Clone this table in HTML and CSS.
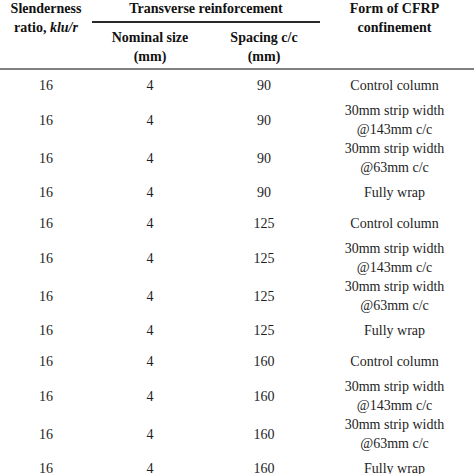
FILE: index.html
```html
<!DOCTYPE html>
<html>
<head>
<meta charset="utf-8">
<link rel="stylesheet" href="styles.css">
</head>
<body>
<table class="data">
  <colgroup>
    <col class="c1"><col class="c2"><col class="c3"><col class="c4">
  </colgroup>
  <thead>
    <tr>
      <th rowspan="2" class="hside">Slenderness<br>ratio, <i>klu/r</i></th>
      <th colspan="2" class="hgroup">Transverse reinforcement</th>
      <th rowspan="2" class="hside last">Form of CFRP<br>confinement</th>
    </tr>
    <tr>
      <th class="hsub">Nominal size<br>(mm)</th>
      <th class="hsub">Spacing c/c<br>(mm)</th>
    </tr>
  </thead>
  <tbody>
    <tr class="one"><td>16</td><td>4</td><td>90</td><td class="last">Control column</td></tr>
    <tr class="two"><td>16</td><td>4</td><td>90</td><td class="last">30mm strip width<br>@143mm c/c</td></tr>
    <tr class="two"><td>16</td><td>4</td><td>90</td><td class="last">30mm strip width<br>@63mm c/c</td></tr>
    <tr class="one"><td>16</td><td>4</td><td>90</td><td class="last">Fully wrap</td></tr>
    <tr class="one"><td>16</td><td>4</td><td>125</td><td class="last">Control column</td></tr>
    <tr class="two"><td>16</td><td>4</td><td>125</td><td class="last">30mm strip width<br>@143mm c/c</td></tr>
    <tr class="two"><td>16</td><td>4</td><td>125</td><td class="last">30mm strip width<br>@63mm c/c</td></tr>
    <tr class="one"><td>16</td><td>4</td><td>125</td><td class="last">Fully wrap</td></tr>
    <tr class="one"><td>16</td><td>4</td><td>160</td><td class="last">Control column</td></tr>
    <tr class="two"><td>16</td><td>4</td><td>160</td><td class="last">30mm strip width<br>@143mm c/c</td></tr>
    <tr class="two"><td>16</td><td>4</td><td>160</td><td class="last">30mm strip width<br>@63mm c/c</td></tr>
    <tr class="one"><td>16</td><td>4</td><td>160</td><td class="last">Fully wrap</td></tr>
  </tbody>
</table>
</body>
</html>
```
FILE: styles.css
```css
html, body {
  margin: 0;
  padding: 0;
  background: #ffffff;
}
body {
  font-family: "Liberation Serif", "Times New Roman", serif;
  font-size: 14px;
  color: #1e1e1e;
  overflow: hidden;
}
.data {
  width: 474px;
  table-layout: fixed;
  border-collapse: collapse;
  border-spacing: 0;
  margin-top: -1px;
}
.c1 { width: 92px; }
.c2 { width: 116px; }
.c3 { width: 112px; }
.c4 { width: 154px; }
th {
  font-weight: bold;
  color: #111;
  line-height: 19px;
  text-align: center;
  padding: 0;
}
th i {
  font-style: italic;
}
.hside {
  vertical-align: top;
  padding-top: 0;
  border-bottom: 2px solid #808080;
}
.hgroup {
  vertical-align: top;
  padding-bottom: 3px;
  border-bottom: 2px solid #2a2a2a;
}
.hsub {
  vertical-align: top;
  padding-top: 5px;
  padding-bottom: 2px;
  border-bottom: 2px solid #808080;
}
td {
  text-align: center;
  vertical-align: middle;
  padding: 0;
  line-height: 19px;
}
.last {
  padding-right: 5px;
}
tr.one td {
  height: 31px;
}
tr.two td {
  height: 38px;
}
```
